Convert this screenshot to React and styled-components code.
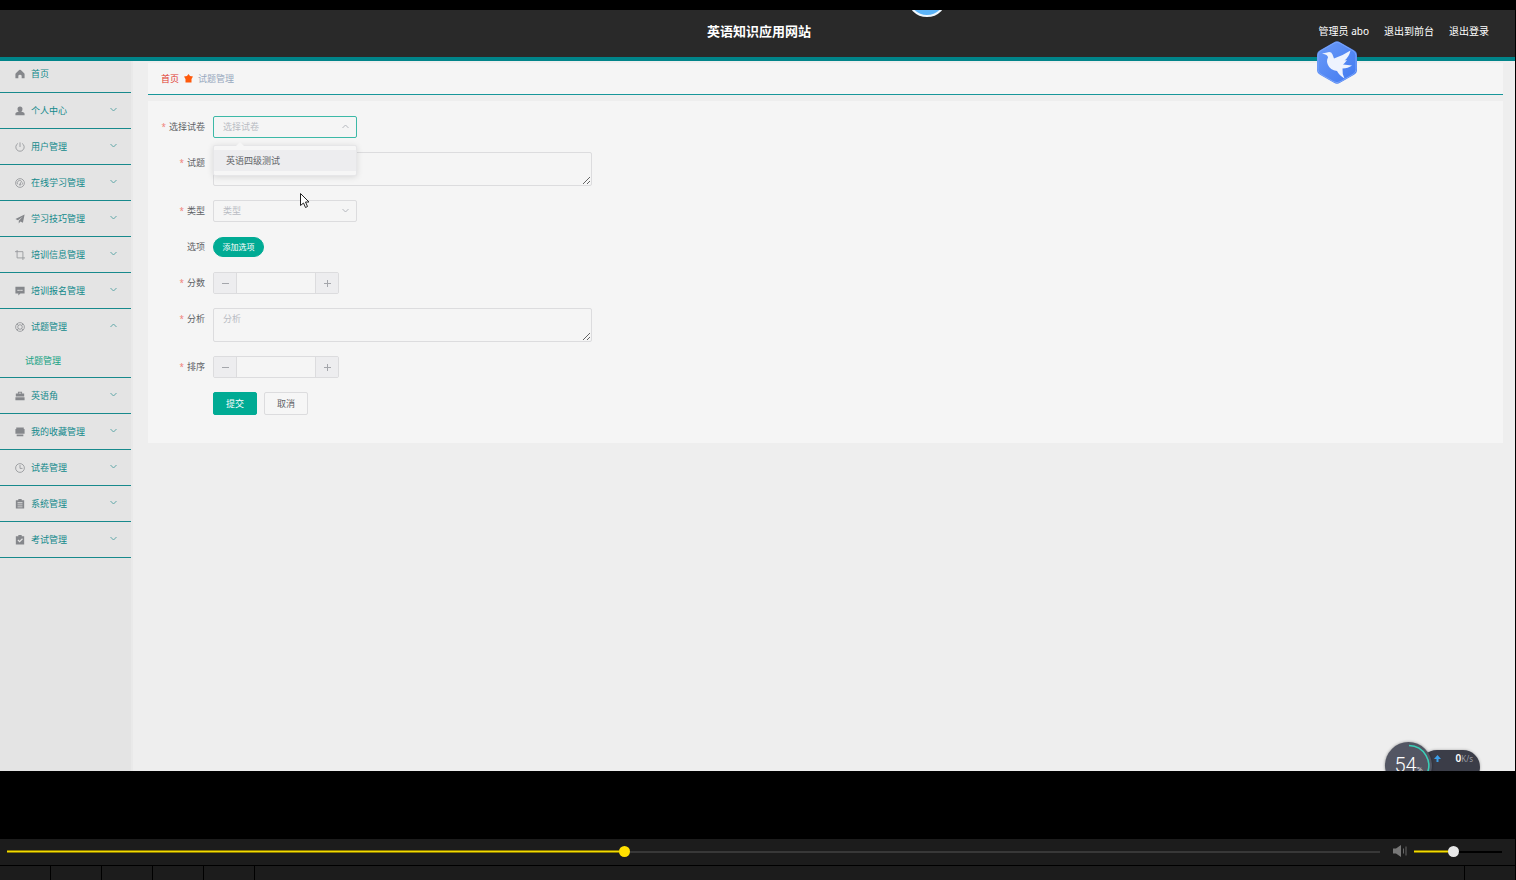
import React, { useState } from "react";
import styled, { createGlobalStyle, css } from "styled-components";

const GlobalStyle = createGlobalStyle`
  * {
    box-sizing: border-box;
  }

  body {
    margin: 0;
    background: #000;
    font-family: "Noto Sans", "Noto Sans CJK SC", sans-serif;
    font-size: 9px;
    color: #606266;
  }

  button, input, select, textarea {
    font-family: inherit;
    font-size: inherit;
    color: inherit;
    margin: 0;
  }
`;

const Page = styled.div`
  display: flex;
  flex-direction: column;
  min-height: 100vh;
  padding-top: 10px;
  background: #000;
`;

const Screen = styled.div`
  position: relative;
  flex: 1;
  display: flex;
  flex-direction: column;
  margin-right: 1px;
  margin-bottom: 68px;
  background: #eee;
  overflow: hidden;
`;

const Header = styled.header`
  display: grid;
  grid-template-columns: 1fr auto 1fr;
  align-items: center;
  height: 51px;
  padding: 0 26px 6px 29px;
  background: #292929;
  border-bottom: 4px solid #008489;
  color: #fff;
`;

const Title = styled.h1`
  grid-column: 2;
  margin: 0;
  font-size: 13px;
  line-height: 20px;
`;

const UserLinks = styled.nav`
  display: flex;
  justify-content: flex-end;
  gap: 15px;
  font-size: 10px;
  line-height: 20px;
`;

const UserLink = styled.a`
  color: #fff;
  text-decoration: none;
`;

const Body = styled.div`
  flex: 1;
  display: flex;
`;

const Sidebar = styled.aside`
  flex: none;
  width: 133px;
  background: #e4e4e4;
  border-right: 2px solid #e9e9e9;
`;

const MenuItem = styled.div`
  border-bottom: 1px solid #17898c;
`;

const MenuLink = styled.a`
  display: flex;
  align-items: center;
  height: ${(props) => (props.$first ? "31px" : "35px")};
  padding: 0 14px 0 15px;
  padding-bottom: ${(props) => (props.$first ? "6px" : "0")};
  gap: 6px;
  color: #12898b;
  text-decoration: none;
  white-space: nowrap;

  span {
    flex: 1;
  }
`;

const SubLink = styled.a`
  display: block;
  height: 33px;
  padding-left: 25px;
  line-height: 33px;
  color: #14a283;
  text-decoration: none;
`;

const MenuIcon = styled.svg`
  flex: none;
  width: 10px;
  height: 10px;
  fill: ${(props) => (props.$line ? "none" : "#85878b")};
  stroke: ${(props) => (props.$line ? "#929497" : "none")};
  stroke-width: 2;
`;

const ArrowIcon = styled.svg`
  flex: none;
  width: 7px;
  height: 7px;
  margin-bottom: 2px;
  fill: none;
  stroke: ${(props) => props.$color};
  transform: ${(props) => (props.$up ? "rotate(180deg)" : "none")};
`;

const Main = styled.main`
  flex: 1;
  min-width: 0;
  padding: 2px 12px 0 15px;
`;

const Breadcrumb = styled.nav`
  display: flex;
  align-items: center;
  gap: 5px;
  height: 32px;
  padding: 0 13px;
  background: #f5f5f5;
  border-bottom: 1px solid #17979a;
  color: #97a8be;
`;

const HomeLink = styled.a`
  color: #e0382e;
  text-decoration: none;
`;

const Form = styled.form`
  display: flex;
  flex-direction: column;
  gap: 14px;
  margin-top: 6px;
  padding: 15px 13px 28px;
  background: #f5f5f5;
`;

const FormRow = styled.div`
  display: flex;
  min-height: 22px;
`;

const labelStyle = css`
  flex: none;
  width: 52px;
  padding-right: 8px;
  line-height: 22px;
  text-align: right;
  white-space: nowrap;
`;

const Label = styled.label`
  ${labelStyle}

  &::before {
    content: "${(props) => (props.$required ? "*" : "")}";
    margin-right: 3px;
    color: #f08078;
    font-size: 8px;
  }
`;

const ButtonRow = styled(FormRow)`
  align-items: center;
  gap: 7px;
  padding-left: 52px;
`;

const SelectBox = styled.div`
  position: relative;
  width: 144px;

  > svg {
    position: absolute;
    right: 8px;
    top: 7px;
    pointer-events: none;
  }
`;

const Select = styled.select`
  display: block;
  width: 100%;
  height: 22px;
  padding: 0 9px 2px;
  appearance: none;
  background: #f5f5f5;
  border: 1px solid ${(props) => (props.$open ? "#3cb9a7" : "#dcdcde")};
  border-radius: 2px;
  color: #b9bcc3;
  outline: none;
`;

const Dropdown = styled.ul`
  position: absolute;
  z-index: 2;
  top: 29px;
  left: 0;
  right: 0;
  margin: 0;
  padding: 4px 0;
  list-style: none;
  background: #f6f6f6;
  border: 1px solid #e6e6e8;
  border-radius: 2px;
  box-shadow: 0 1px 6px rgba(0, 0, 0, 0.12);

  &::before {
    content: "";
    position: absolute;
    top: -4px;
    left: 22px;
    border: 4px solid transparent;
    border-top: 0;
    border-bottom-color: #f6f6f6;
  }
`;

const Option = styled.li`
  padding: 0 12px;
  line-height: 21px;
  background: #ededef;
`;

const TextArea = styled.textarea`
  display: block;
  width: 379px;
  max-width: 100%;
  height: 34px;
  padding: 3px 9px;
  line-height: 14px;
  background: #f5f5f5;
  border: 1px solid #dcdcde;
  border-radius: 2px;
  outline: none;
  resize: vertical;

  &::placeholder {
    color: #b9bcc3;
  }
`;

const NumberBox = styled.div`
  display: flex;
  width: 126px;
  height: 22px;
  border: 1px solid #dcdcde;
  border-radius: 2px;
  overflow: hidden;
`;

const StepButton = styled.button`
  display: flex;
  align-items: center;
  justify-content: center;
  width: 22px;
  padding: 0;
  background: #ededef;
  border: none;

  svg {
    width: 9px;
    height: 9px;
    stroke: #a4a6ab;
  }
`;

const NumberInput = styled.input`
  flex: 1;
  min-width: 0;
  padding: 0 6px;
  background: #f5f5f5;
  border: solid #dcdcde;
  border-width: 0 1px;
  text-align: center;
  outline: none;
`;

const Button = styled.button`
  width: 44px;
  height: 23px;
  padding: 0;
  background: ${(props) => (props.$primary ? "#00ab94" : "#f6f6f6")};
  border: 1px solid ${(props) => (props.$primary ? "#00ab94" : "#dcdcde")};
  border-radius: 2px;
  color: ${(props) => (props.$primary ? "#fff" : "#606266")};
  line-height: 20px;
  cursor: pointer;
`;

const AddButton = styled(Button)`
  width: 51px;
  height: 20px;
  margin-top: 1px;
  border-radius: 10px;
  font-size: 8px;
  line-height: 16px;
`;

/* things floating above the site */

const TopBubble = styled.div`
  position: absolute;
  top: -33px;
  left: 907px;
  width: 40px;
  height: 40px;
  background: #5cb4f8;
  border: 2px solid #eef6fc;
  border-radius: 50%;
`;

const BirdBadge = styled.svg`
  position: absolute;
  top: 30px;
  right: 157px;
  width: 42px;
  height: 45px;
`;

const Pointer = styled.svg`
  position: absolute;
  z-index: 3;
  top: 182px;
  left: 299px;
  width: 11px;
  height: 17px;
`;

const SpeedWidget = styled.div`
  position: absolute;
  right: 35px;
  bottom: -19px;
  width: 95px;
  height: 48px;
`;

const SpeedBar = styled.div`
  position: absolute;
  top: 8px;
  right: 0;
  display: flex;
  justify-content: space-between;
  width: 60px;
  height: 34px;
  padding: 0 7px 0 14px;
  background: #3b3d48;
  border-radius: 17px;
  box-shadow: 0 0 3px rgba(0, 0, 0, 0.3);
  color: #9a9ca4;
  font-size: 8px;
  line-height: 16px;

  b {
    color: #fff;
    font-size: 10px;
    font-weight: 600;
  }

  svg {
    width: 7px;
    height: 7px;
    margin-top: 5px;
  }
`;

const SpeedCircle = styled.div`
  position: absolute;
  top: 0;
  left: 0;
  width: 47px;
  height: 47px;
  background: #535663;
  border-radius: 50%;
  box-shadow: 0 0 3px rgba(0, 0, 0, 0.4);
  color: #fff;
  font-family: Roboto, sans-serif;
  font-size: 20px;
  font-weight: 300;
  line-height: 47px;
  text-align: center;

  small {
    font-size: 8px;
  }

  svg {
    position: absolute;
    inset: 0;
  }
`;

/* video player */

const Player = styled.div`
  display: flex;
  align-items: center;
  height: 26px;
  margin-right: 1px;
  padding: 0 13px 2px 7px;
  background: #1c1c1c;
`;

const Slider = styled.input`
  --fill: ${(props) => props.$fill};
  --rest: ${(props) => props.$rest};
  flex: ${(props) => (props.$wide ? "1" : "none")};
  width: 88px;
  min-width: 0;
  height: 11px;
  margin: 0;
  appearance: none;
  background: none;

  &::-webkit-slider-runnable-track {
    height: 3px;
    background:
      linear-gradient(#8a7a00 1px, #f3dc00 1px, #f3dc00 2px, #8a7a00 2px) 0 0 / var(--fill) 3px no-repeat,
      linear-gradient(var(--rest), var(--rest)) 0 1px / 100% 2px no-repeat;
  }

  &::-webkit-slider-thumb {
    appearance: none;
    width: 11px;
    height: 11px;
    margin-top: -4px;
    background: ${(props) => props.$thumb};
    border-radius: 50%;
  }
`;

const VolumeIcon = styled.svg`
  flex: none;
  width: 15px;
  height: 14px;
  margin: 0 7px 0 12px;
`;

const Strip = styled.div`
  display: flex;
  gap: 1px;
  height: 15px;
  margin-right: 1px;
  padding-top: 1px;
`;

const Cell = styled.div`
  flex: ${(props) => (props.$grow ? "1" : "0 0 50px")};
  background: #1c1c1c;
`;

const menu = [
  { name: "首页", icon: <path d="M12 1.500q1 0 2 1l8 7.500q1 1 1 2.500V22h-7v-5q0-3-4-3t-4 3v5H1v-9.500Q1 11 2 10l8-7.500q1-1 2-1z" /> },
  { name: "个人中心", icon: <path d="M12 1a6 6 0 0 1 6 6q0 5-3 7c5 .5 8 2 8 5v3H1v-3c0-3 3-4.500 8-5Q6 12 6 7a6 6 0 0 1 6-6z" /> },
  { name: "用户管理", line: true, icon: <path d="M7 3.500a10 10 0 1 0 10 0M12 1v11" /> },
  {
    name: "在线学习管理",
    line: true,
    icon: (
      <>
        <circle cx="12" cy="12" r="10.500" />
        <path d="M6 15a6.500 6.500 0 0 1 8-9M18 11a6 6 0 0 1-1 5M16 7l-4 8" />
        <circle cx="12" cy="16" r="1.500" />
      </>
    ),
  },
  { name: "学习技巧管理", icon: <path d="M23 1 1 12l6 3L19 6 9 16v7l4-5 6 3z" /> },
  { name: "培训信息管理", line: true, icon: <path d="M5 0v19h19M0 4h19v20" /> },
  {
    name: "培训报名管理",
    icon: <path fillRule="evenodd" d="M1 2h22v16H13l-5 5v-5H1zM6 9v3h3V9zM10.500 9v3h3V9zM15 9v3h3V9z" />,
  },
  {
    name: "试题管理",
    line: true,
    children: ["试题管理"],
    icon: (
      <>
        <circle cx="12" cy="12" r="10.500" />
        <circle cx="12" cy="12" r="5.500" />
        <path d="m4.500 4.500 4 4M19.500 4.500l-4 4M4.500 19.500l4-4M19.500 19.500l-4-4" />
      </>
    ),
  },
  {
    name: "英语角",
    icon: <path fillRule="evenodd" d="M7 2h10v4h5v7H2V6h5zM9 4v2h6V4zM1 15h22v7H1z" />,
  },
  { name: "我的收藏管理", icon: <path d="M3 1h18v4h2v11H1V5h2zM4 18h16v4H4z" /> },
  {
    name: "试卷管理",
    line: true,
    icon: (
      <>
        <circle cx="12" cy="12" r="10.500" />
        <path d="M12 5v8h6" />
      </>
    ),
  },
  {
    name: "系统管理",
    icon: <path fillRule="evenodd" d="M8 0h8v3h6v20H2V3h6zM6 8v2h12V8zM6 13v2h12v-2zM6 18v2h12v-2z" />,
  },
  {
    name: "考试管理",
    icon: <path fillRule="evenodd" d="M8 0h8v3h6v20H2V3h6zM6 13l5 5 8-8-2-2-6 6-3-3z" />,
  },
];

const Arrow = ({ up, color = "#b4b7bd" }) => (
  <ArrowIcon $up={up} $color={color} viewBox="0 0 7 7">
    <path d="M.5 2 3.500 5l3-3" />
  </ArrowIcon>
);

const NumberField = ({ id }) => {
  const [value, setValue] = useState("");

  return (
    <NumberBox>
      <StepButton type="button" aria-label="-" onClick={() => setValue(Number(value) - 1)}>
        <svg viewBox="0 0 9 9"><path d="M1 4.500h7" /></svg>
      </StepButton>
      <NumberInput id={id} value={value} onChange={(e) => setValue(e.target.value)} />
      <StepButton type="button" aria-label="+" onClick={() => setValue(Number(value) + 1)}>
        <svg viewBox="0 0 9 9"><path d="M1 4.500h7M4.500 1v7" /></svg>
      </StepButton>
    </NumberBox>
  );
};

const SideMenu = () => (
  <Sidebar>
    {menu.map((item, i) => (
      <MenuItem key={item.name}>
        <MenuLink href="#" $first={i === 0}>
          <MenuIcon viewBox="0 0 24 24" $line={item.line}>{item.icon}</MenuIcon>
          <span>{item.name}</span>
          {i > 0 && <Arrow up={Boolean(item.children)} color="#5fa6a7" />}
        </MenuLink>
        {item.children && item.children.map((child) => (
          <SubLink key={child} href="#">{child}</SubLink>
        ))}
      </MenuItem>
    ))}
  </Sidebar>
);

const QuestionForm = () => (
  <Form onSubmit={(e) => e.preventDefault()}>
    <FormRow>
      <Label htmlFor="paper" $required>选择试卷</Label>
      <SelectBox>
        <Select id="paper" $open>
          <option>选择试卷</option>
        </Select>
        <Arrow up />
        <Dropdown>
          <Option>英语四级测试</Option>
        </Dropdown>
      </SelectBox>
    </FormRow>
    <FormRow>
      <Label htmlFor="question" $required>试题</Label>
      <TextArea id="question" />
    </FormRow>
    <FormRow>
      <Label htmlFor="type" $required>类型</Label>
      <SelectBox>
        <Select id="type">
          <option>类型</option>
        </Select>
        <Arrow />
      </SelectBox>
    </FormRow>
    <FormRow>
      <Label htmlFor="add">选项</Label>
      <AddButton id="add" type="button" $primary>添加选项</AddButton>
    </FormRow>
    <FormRow>
      <Label htmlFor="score" $required>分数</Label>
      <NumberField id="score" />
    </FormRow>
    <FormRow>
      <Label htmlFor="analysis" $required>分析</Label>
      <TextArea id="analysis" placeholder="分析" />
    </FormRow>
    <FormRow>
      <Label htmlFor="order" $required>排序</Label>
      <NumberField id="order" />
    </FormRow>
    <ButtonRow>
      <Button type="submit" $primary>提交</Button>
      <Button type="button">取消</Button>
    </ButtonRow>
  </Form>
);

const Floating = () => (
  <>
    <TopBubble />
    <BirdBadge viewBox="0 0 42 45">
      <defs>
        <linearGradient id="badge" x1="0" y1="0" x2="1" y2="1">
          <stop offset="0" stopColor="#6c9bf8" />
          <stop offset="1" stopColor="#3f78f0" />
        </linearGradient>
      </defs>
      <path
        d="M18 2.200q3-1.700 6 0l14 8q3 1.700 3 5v14.600q0 3.300-3 5l-14 8q-3 1.700-6 0l-14-8q-3-1.700-3-5V15.200q0-3.300 3-5z"
        fill="url(#badge)"
      />
      <path
        d="M18 3.200q3-1.700 6 0l13 7.500q3 1.700 3 5v13.600q0 3.300-3 5l-13 7.500q-3 1.700-6 0l-13-7.500q-3-1.700-3-5V15.700q0-3.300 3-5z"
        fill="none"
        stroke="#78a3fa"
        strokeWidth="1"
      />
      <path
        d="M6 13.500Q9 13 11 12.500q4-1.500 5.500 2l1.500 4Q26 16 34.500 10.500 33 17 28.500 20.500L31 20q-2 3-4 4.500l9 1q-4 3-9.500 3-.5 5 2 10Q23 35 21 31q-7-1-9-6-2-4 0-7.500 0-3-6-4z"
        fill="#eef3fe"
      />
    </BirdBadge>
    <Pointer viewBox="0 0 11 17">
      <path d="M1.500 1.500v12l3-2.500 2 4.500 2-1-2-4.500h3.500z" fill="#fff" stroke="#222" />
    </Pointer>
    <SpeedWidget>
      <SpeedBar>
        <svg viewBox="0 0 7 7">
          <path d="M3.500 0 7 4H4.500v3h-2V4H0z" fill="#3c9fe8" />
        </svg>
        <span><b>0</b>K/s</span>
      </SpeedBar>
      <SpeedCircle>
        54<small>%</small>
        <svg viewBox="0 0 47 47" fill="none" stroke="#39d0b8" strokeWidth="1.500">
          <path d="M24 3.500a20 20 0 0 1 17 30" />
        </svg>
      </SpeedCircle>
    </SpeedWidget>
  </>
);

const PlayerBar = () => {
  const [time, setTime] = useState(44.9);
  const [volume, setVolume] = useState(44);

  return (
    <Player>
      <Slider
        type="range"
        step="any"
        aria-label="进度"
        $wide
        $rest="#383838"
        $thumb="#ffe000"
        $fill={`${time}%`}
        value={time}
        onChange={(e) => setTime(e.target.value)}
      />
      <VolumeIcon viewBox="0 0 15 14">
        <path d="M1 4.500h3L9 1v12L4 9.500H1z" fill="#777" />
        <path d="M11.500 4.500v5M14 2.500v9" stroke="#666" />
      </VolumeIcon>
      <Slider
        type="range"
        step="any"
        aria-label="音量"
        $rest="#000"
        $thumb="#e8e8e8"
        $fill={`${volume}%`}
        value={volume}
        onChange={(e) => setVolume(e.target.value)}
      />
    </Player>
  );
};

const App = () => {
  return (
    <Page lang="zh-CN">
      <GlobalStyle />
      <Screen>
        <Header>
          <Title>英语知识应用网站</Title>
          <UserLinks>
            <UserLink href="#">管理员 abo</UserLink>
            <UserLink href="#">退出到前台</UserLink>
            <UserLink href="#">退出登录</UserLink>
          </UserLinks>
        </Header>
        <Body>
          <SideMenu />
          <Main>
            <Breadcrumb>
              <HomeLink href="#">首页</HomeLink>
              <svg width="9" height="9" viewBox="0 0 18 18" fill="#ff5a0c">
                <path d="M9 0l3 4 6 1-3 5v7H3v-7L0 5l6-1z" />
              </svg>
              <span>试题管理</span>
            </Breadcrumb>
            <QuestionForm />
          </Main>
        </Body>
        <Floating />
      </Screen>
      <PlayerBar />
      <Strip>
        <Cell />
        <Cell />
        <Cell />
        <Cell />
        <Cell />
        <Cell $grow />
        <Cell />
      </Strip>
    </Page>
  );
};

export default App;
